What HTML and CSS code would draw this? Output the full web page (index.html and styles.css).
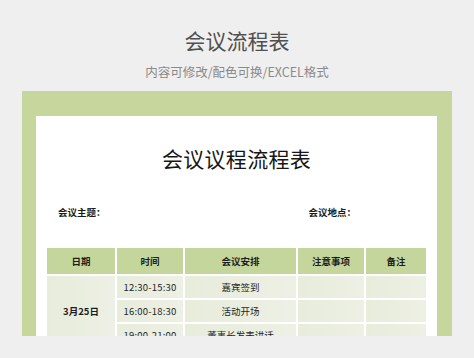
FILE: index.html
```html
<!DOCTYPE html>
<html lang="zh-CN">
<head>
<meta charset="utf-8">
<link rel="stylesheet" href="styles.css">
</head>
<body>
<div class="stage">
  <header class="head">
    <h1 class="title">会议流程表</h1>
    <p class="sub">内容可修改/配色可换/EXCEL格式</p>
  </header>
  <section class="frame">
    <div class="sheet">
      <h2 class="sheet-title">会议议程流程表</h2>
      <div class="meta">
        <span class="meta-item">会议主题：</span>
        <span class="meta-item meta-place">会议地点：</span>
      </div>
      <table class="grid">
        <colgroup>
          <col class="c1"><col class="c2"><col class="c3"><col class="c4"><col class="c5">
        </colgroup>
        <thead>
          <tr><th>日期</th><th>时间</th><th>会议安排</th><th>注意事项</th><th>备注</th></tr>
        </thead>
        <tbody>
          <tr><td rowspan="3" class="date">3月25日</td><td class="time">12:30-15:30</td><td>嘉宾签到</td><td></td><td></td></tr>
          <tr><td class="time">16:00-18:30</td><td>活动开场</td><td></td><td></td></tr>
          <tr><td class="time">19:00-21:00</td><td>董事长发表讲话</td><td></td><td></td></tr>
          <tr><td class="date"></td><td class="time"></td><td></td><td></td><td></td></tr>
        </tbody>
      </table>
    </div>
  </section>
</div>
</body>
</html>
```
FILE: styles.css
```css
html, body {
  margin: 0;
  padding: 0;
  background: #efefef;
}
body {
  width: 474px;
  height: 358px;
  overflow: hidden;
  font-family: "Noto Sans CJK SC", "Noto Sans", sans-serif;
}
.stage {
  height: 336px;
  overflow: hidden;
}
.head {
  padding-top: 25px;
  text-align: center;
}
.title {
  margin: 0;
  font-size: 21px;
  line-height: 30px;
  font-weight: 400;
  color: #505050;
}
.sub {
  margin: 7px 0 0;
  font-size: 12.5px;
  line-height: 20px;
  color: #8a8a8a;
}
.frame {
  margin: 9px 22px 0 22px;
  background: #c6d69c;
  padding: 25px 15px 0 14px;
  height: 400px;
}
.sheet {
  background: #ffffff;
  padding: 27px 9px 0 9px;
  height: 400px;
}
.sheet-title {
  margin: 0;
  text-align: center;
  font-size: 21px;
  line-height: 30px;
  font-weight: 400;
  color: #161616;
  letter-spacing: 0.3px;
}
.meta {
  margin-top: 32px;
  display: flex;
  padding-left: 13px;
  font-size: 9.5px;
  line-height: 14px;
  font-weight: 700;
  color: #1a1a1a;
}
.meta-place {
  margin-left: 203px;
}
.grid {
  margin-top: 27px;
  border-collapse: separate;
  border-spacing: 2px;
  width: 383px;
  table-layout: fixed;
  font-size: 9.5px;
  color: #262626;
}
.c1 { width: 68px; }
.c2 { width: 66px; }
.c3 { width: 111px; }
.c4 { width: 66px; }
.c5 { width: 60px; }
.grid th {
  background: #c4d69b;
  height: 26px;
  padding: 0;
  font-weight: 700;
  font-size: 9.5px;
  color: #1e1e1e;
  text-align: center;
}
.grid td {
  background: linear-gradient(90deg, #e7ecdb, #edf0e4);
  height: 22px;
  padding: 0;
  text-align: center;
}
.grid td.time {
  font-size: 9.5px;
  letter-spacing: 0.2px;
}
.grid td.date {
  font-weight: 700;
  font-size: 9.5px;
  color: #1e1e1e;
}
```
